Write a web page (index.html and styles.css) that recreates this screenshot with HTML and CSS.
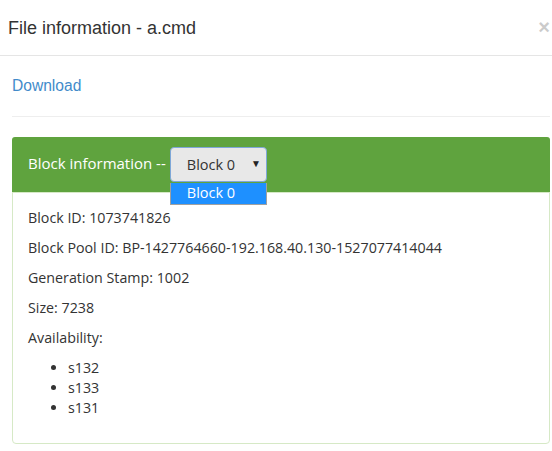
FILE: index.html
```html
<!DOCTYPE html>
<html>
<head>
<meta charset="utf-8">
<link rel="stylesheet" href="styles.css">
</head>
<body>
<div class="modal">
  <div class="modal-header">
    <h4 class="modal-title">File information - a.cmd</h4>
    <span class="close">×</span>
  </div>
  <div class="modal-body">
    <a class="download" href="#">Download</a>
    <hr class="sep">
    <div class="panel">
      <div class="panel-heading">
        <span class="heading-text">Block information --</span>
        <div class="select">
          <span class="select-value">Block 0</span>
          <span class="select-arrow">▼</span>
          <div class="select-list">
            <div class="select-option">Block 0</div>
          </div>
        </div>
      </div>
      <div class="panel-body">
        <p>Block ID: 1073741826</p>
        <p>Block Pool ID: BP-1427764660-192.168.40.130-1527077414044</p>
        <p>Generation Stamp: 1002</p>
        <p>Size: 7238</p>
        <p>Availability:</p>
        <ul>
          <li>s132</li>
          <li>s133</li>
          <li>s131</li>
        </ul>
      </div>
    </div>
  </div>
</div>
</body>
</html>
```
FILE: styles.css
```css
html, body {
  margin: 0;
  padding: 0;
  background: #fff;
}
body {
  font-family: "Liberation Sans", Arial, sans-serif;
  color: #333;
  width: 552px;
  height: 451px;
  overflow: hidden;
}
.modal-header {
  height: 55px;
  border-bottom: 1px solid #e5e5e5;
  display: flex;
  align-items: center;
  justify-content: space-between;
  padding: 0 0 0 8px;
}
.modal-title {
  margin: 0;
  font-size: 18px;
  font-weight: normal;
  line-height: 20px;
  color: #333;
}
.close {
  font-size: 20px;
  font-weight: bold;
  color: #000;
  opacity: 0.2;
  line-height: 1;
  margin-right: 2px;
  margin-top: -2px;
}
.modal-body {
  padding: 19px 2px 0 12px;
}
.download {
  display: block;
  font-size: 15.6px;
  line-height: 22px;
  color: #428bca;
  text-decoration: none;
}
.sep {
  margin: 19px 0 20px 0;
  border: 0;
  border-top: 1px solid #eee;
  height: 0;
}
.panel {
  border: 1px solid #d6e9c6;
  border-radius: 4px;
  font-family: "Open Sans", "Noto Sans", sans-serif;
}
.panel-heading {
  background: #5fa33e;
  color: #fff;
  padding: 10px 15px 10px 16px;
  border-bottom: 1px solid #d6e9c6;
  border-radius: 3px 3px 0 0;
  display: flex;
  align-items: center;
  margin: -1px -1px 0 -1px;
}
.heading-text {
  font-size: 15px;
  line-height: 20px;
  margin-top: -3px;
}
.select {
  position: relative;
  margin-left: 4px;
  width: 97px;
  height: 35px;
  box-sizing: border-box;
  background: #e8e8e8;
  border: 1px solid #7ea7d8;
  border-radius: 4px;
  color: #333;
  display: flex;
  align-items: center;
  padding: 0 5px 0 16px;
}
.select-value {
  font-size: 14.5px;
  flex: 1;
}
.select-arrow {
  font-size: 10px;
  color: #222;
  margin-top: -3px;
}
.select-list {
  position: absolute;
  left: -1px;
  top: 35px;
  width: 97px;
  height: 22px;
  box-sizing: border-box;
  border: 1px solid #a0a0a0;
  border-top: 0;
  background: #1e90ff;
  z-index: 2;
}
.select-option {
  color: #fff;
  font-size: 14.5px;
  line-height: 20px;
  padding-left: 16px;
}
.panel-body {
  padding: 15px;
  font-size: 14.25px;
  line-height: 20px;
}
.panel-body p {
  margin: 0 0 10px;
}
.panel-body ul {
  margin: 0 0 10px;
  padding-left: 40px;
}
```
